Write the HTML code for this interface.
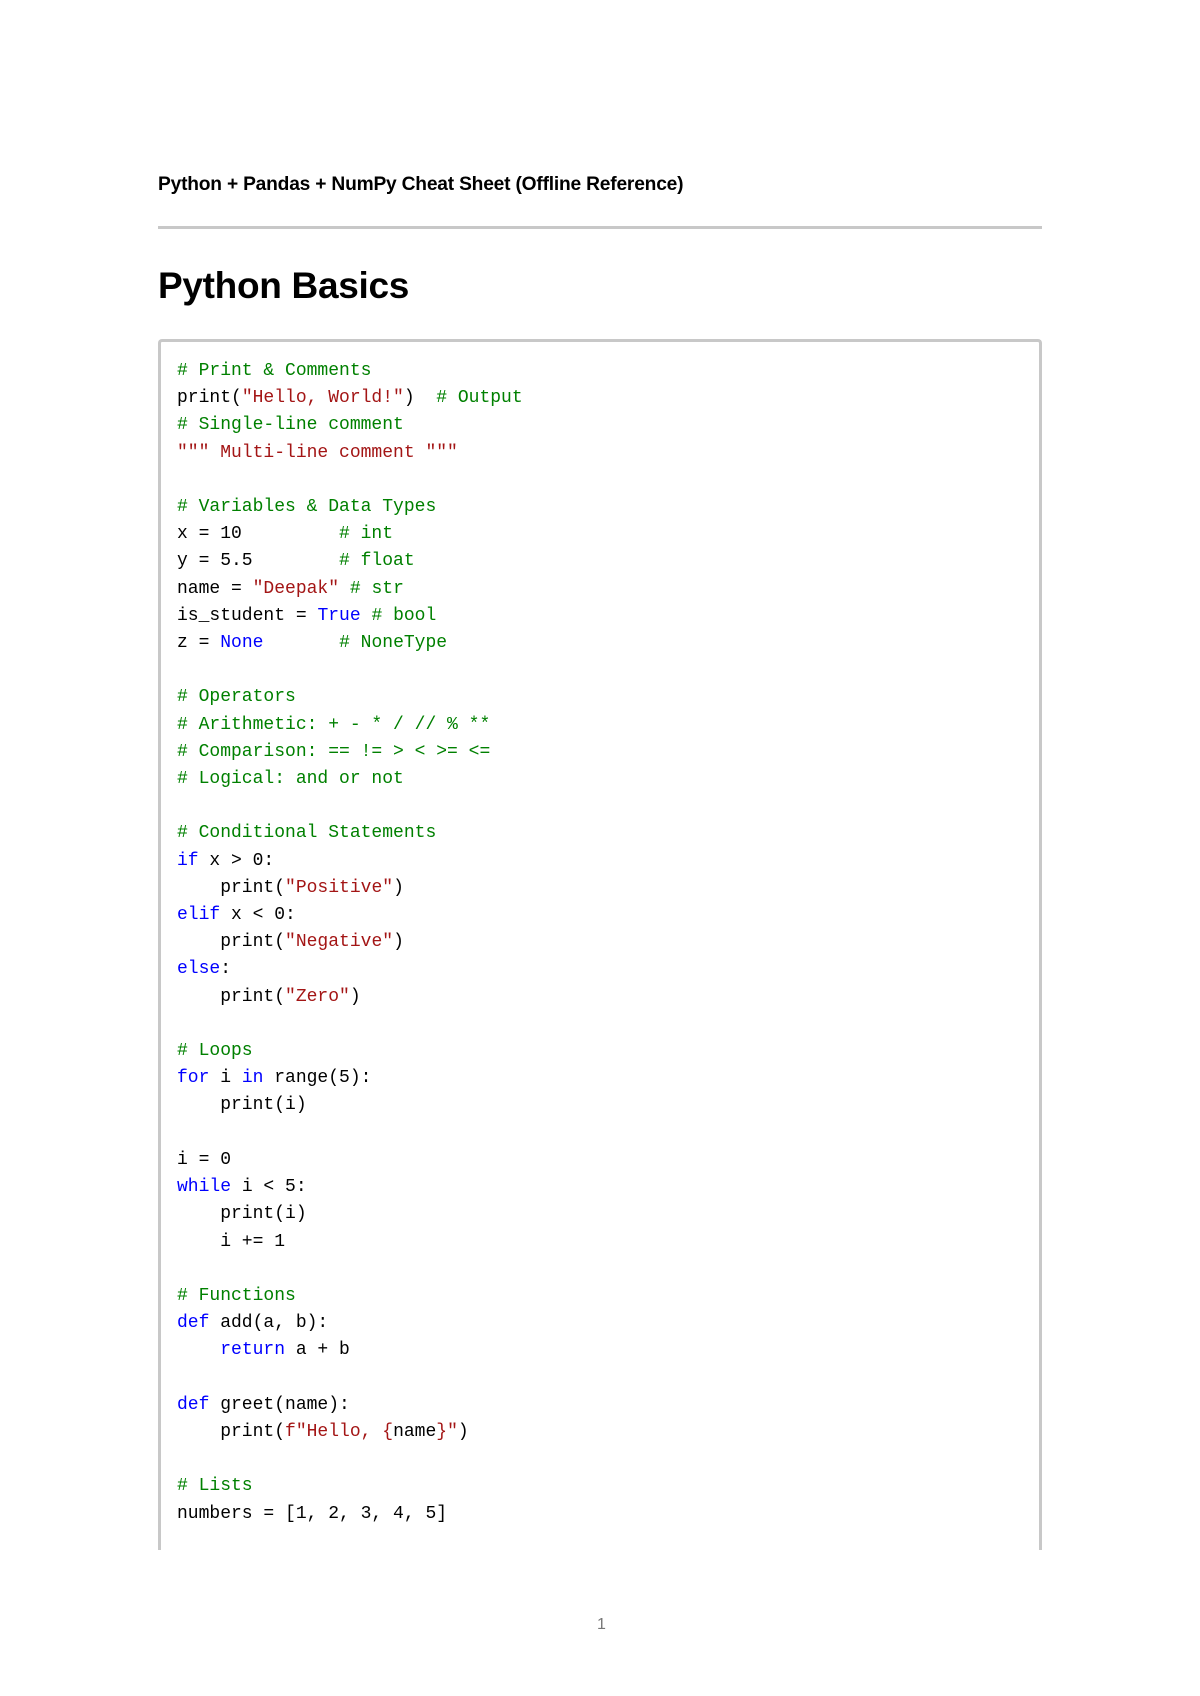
<!DOCTYPE html>
<html><head><meta charset="utf-8"><style>
html,body{margin:0;padding:0;background:#fff;}
body{width:1200px;height:1696px;position:relative;overflow:hidden;font-family:"Liberation Sans",sans-serif;color:#000;}
.title{position:absolute;left:158px;top:174px;font-size:19.2px;font-weight:bold;letter-spacing:-0.2px;}
.hr{position:absolute;left:158px;top:226px;width:884px;height:3px;background:#c8c8c8;}
h1{position:absolute;left:158px;top:265px;margin:0;font-size:37px;font-weight:bold;letter-spacing:-0.3px;}
.box{position:absolute;left:158px;top:339px;width:878px;height:1208px;border:3px solid #c8c8c8;border-bottom:none;border-radius:4px 4px 0 0;}
pre{position:absolute;left:177px;top:358px;margin:0;font-family:"Liberation Mono",monospace;font-size:18px;line-height:27.2px;color:#000;}
.c{color:#008000}.k{color:#0000ff}.s{color:#a31515}
.pn{position:absolute;left:597px;top:1616px;font-size:16px;color:#777;}
</style></head><body>
<div class="title">Python + Pandas + NumPy Cheat Sheet (Offline Reference)</div>
<div class="hr"></div>
<h1>Python Basics</h1>
<div class="box"></div>
<pre><span class="c"># Print &amp; Comments</span>
print(<span class="s">"Hello, World!"</span>)  <span class="c"># Output</span>
<span class="c"># Single-line comment</span>
<span class="s">""" Multi-line comment """</span>

<span class="c"># Variables &amp; Data Types</span>
x = 10         <span class="c"># int</span>
y = 5.5        <span class="c"># float</span>
name = <span class="s">"Deepak"</span> <span class="c"># str</span>
is_student = <span class="k">True</span> <span class="c"># bool</span>
z = <span class="k">None</span>       <span class="c"># NoneType</span>

<span class="c"># Operators</span>
<span class="c"># Arithmetic: + - * / // % **</span>
<span class="c"># Comparison: == != &gt; &lt; &gt;= &lt;=</span>
<span class="c"># Logical: and or not</span>

<span class="c"># Conditional Statements</span>
<span class="k">if</span> x &gt; 0:
    print(<span class="s">"Positive"</span>)
<span class="k">elif</span> x &lt; 0:
    print(<span class="s">"Negative"</span>)
<span class="k">else</span>:
    print(<span class="s">"Zero"</span>)

<span class="c"># Loops</span>
<span class="k">for</span> i <span class="k">in</span> range(5):
    print(i)

i = 0
<span class="k">while</span> i &lt; 5:
    print(i)
    i += 1

<span class="c"># Functions</span>
<span class="k">def</span> add(a, b):
    <span class="k">return</span> a + b

<span class="k">def</span> greet(name):
    print(<span class="s">f"Hello, {</span>name<span class="s">}"</span>)

<span class="c"># Lists</span>
numbers = [1, 2, 3, 4, 5]</pre>
<div class="pn">1</div>
</body></html>
